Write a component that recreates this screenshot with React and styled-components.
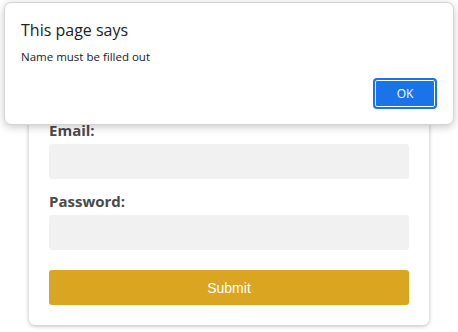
import styled, { createGlobalStyle } from 'styled-components';

const GlobalStyle = createGlobalStyle`
  html, body {
    margin: 0;
    padding: 0;
    background: #ffffff;
  }
  * {
    box-sizing: border-box;
  }
`;

const Page = styled.div`
  position: relative;
  width: 458px;
  height: 332px;
  overflow: hidden;
  font-family: "Open Sans", "Noto Sans", sans-serif;
`;

// the top of the card sits under the alert, only the lower fields show
const FormCard = styled.form`
  width: 400px;
  margin: 100px auto 0;
  padding: 20px;
  background: #fff;
  border-radius: 6px;
  box-shadow: 0 1px 4px rgba(0, 0, 0, 0.28);
`;

const Label = styled.label`
  display: block;
  font-size: 15px;
  font-weight: 700;
  line-height: 20px;
  color: #4a4a4a;
  margin-bottom: 4px;
`;

const Input = styled.input`
  display: block;
  width: 100%;
  height: 35px;
  border: none;
  border-radius: 3px;
  background: #f1f1f1;
  margin-bottom: 12px;
  outline: none;
`;

const SubmitButton = styled.button`
  display: block;
  width: 100%;
  height: 35px;
  margin-top: 20px;
  border: none;
  border-radius: 3px;
  background: #daa520;
  color: #fff;
  font-family: "Liberation Sans", Arial, sans-serif;
  font-size: 14px;
`;

const Dialog = styled.div`
  position: absolute;
  top: 2px;
  left: 4px;
  width: 450px;
  height: 123px;
  background: #fff;
  border: 1px solid #d4d4d4;
  border-radius: 7px;
  box-shadow: 0 2px 8px rgba(0, 0, 0, 0.22);
  padding: 16px 16px 15px 16px;
  display: flex;
  flex-direction: column;
`;

const DialogTitle = styled.div`
  font-size: 16px;
  line-height: 22px;
  color: #202124;
  margin-bottom: 8px;
`;

const DialogMessage = styled.div`
  font-size: 11.5px;
  line-height: 16px;
  color: #202124;
`;

const DialogActions = styled.div`
  display: flex;
  justify-content: flex-end;
  margin-top: auto;
`;

const OkButton = styled.button`
  width: 64px;
  height: 31px;
  border-radius: 4px;
  border: 2px solid #1a73e8;
  box-shadow: inset 0 0 0 1px #ffffff;
  background: #1a73e8;
  color: #fff;
  font-family: "Open Sans", "Noto Sans", sans-serif;
  font-size: 12px;
  padding: 0;
`;

export default function App() {
  return (
    <>
      <GlobalStyle />
      <Page>
        <FormCard onSubmit={(e) => e.preventDefault()}>
          <Label>Email:</Label>
          <Input type="email" />
          <Label>Password:</Label>
          <Input type="password" />
          <SubmitButton type="submit">Submit</SubmitButton>
        </FormCard>
        <Dialog role="alertdialog">
          <DialogTitle>This page says</DialogTitle>
          <DialogMessage>Name must be filled out</DialogMessage>
          <DialogActions>
            <OkButton type="button">OK</OkButton>
          </DialogActions>
        </Dialog>
      </Page>
    </>
  );
}
